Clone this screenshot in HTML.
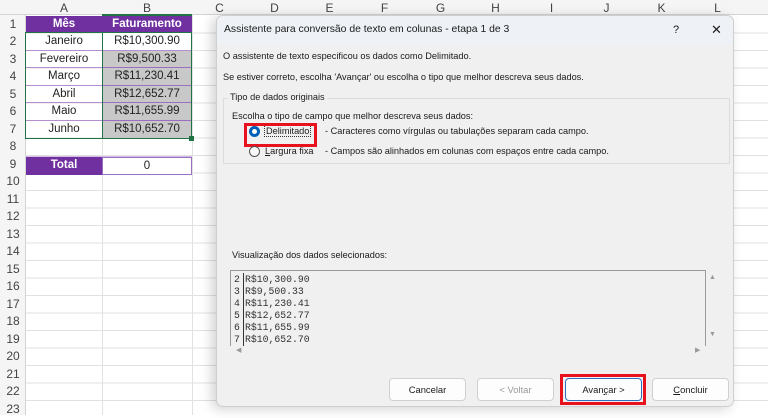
<!DOCTYPE html>
<html><head><meta charset="utf-8"><style>
*{margin:0;padding:0;box-sizing:border-box}
body{width:768px;height:415px;overflow:hidden;background:#fff;font-family:"Liberation Sans",sans-serif;position:relative}
.a{position:absolute}
.grid{left:26px;top:15.5px;width:742px;height:400px;background:repeating-linear-gradient(to bottom,transparent 0,transparent 16.5px,#e1e1e1 16.5px,#e1e1e1 17.5px)}
.vl{position:absolute;top:0;width:1px;height:415px;background:#e1e1e1}
.colh{top:0;height:15px;left:0;width:768px;background:#f5f5f5;border-bottom:1px solid #d4d4d4}
.ch{position:absolute;top:1px;height:15px;font-size:12px;color:#444;text-align:center;line-height:15px}
.rowh{left:0;top:15px;width:26px;height:400px;background:#f5f5f5;border-right:1px solid #d4d4d4}
.rn{position:absolute;left:0;width:26px;text-align:center;font-size:12px;color:#444;line-height:17.5px;height:17.5px}
.c{position:absolute;height:17.5px;line-height:17px;font-size:11.5px;text-align:center;color:#222}
.hd{background:#7030a0;color:#fff;font-weight:bold}
.dlg{left:216px;top:15px;width:518px;height:392px;background:#f0f0f0;border:1px solid #cfcfcf;border-radius:7px;box-shadow:-4px 2px 12px rgba(0,0,0,.18);overflow:hidden;font-size:9.2px;color:#1a1a1a}
.tb{left:0;top:0;width:100%;height:28px;background:#eef2f7;font-size:10.4px;line-height:28px;padding-left:7px;color:#1a1a1a}
.btn{position:absolute;top:362px;height:23px;width:77px;background:#fdfdfd;border:1px solid #d0d0d0;border-radius:4px;text-align:center;line-height:21px;font-size:9.4px}
.pv{font-family:"Liberation Mono",monospace;font-size:9.8px;line-height:12px;color:#333}
</style></head><body>
<div class="a grid"></div>
<div class="vl" style="left:102px"></div><div class="vl" style="left:192px"></div>
<div class="a colh">
<div class="ch" style="left:26px;width:76px">A</div>
<div class="ch" style="left:102px;width:90px">B</div>
<div class="ch" style="left:192px;width:55px">C</div>
<div class="ch" style="left:247px;width:55px">D</div>
<div class="ch" style="left:302px;width:55px">E</div>
<div class="ch" style="left:357px;width:55px">F</div>
<div class="ch" style="left:413px;width:55px">G</div>
<div class="ch" style="left:468px;width:55px">H</div>
<div class="ch" style="left:524px;width:55px">I</div>
<div class="ch" style="left:579px;width:55px">J</div>
<div class="ch" style="left:634px;width:55px">K</div>
<div class="ch" style="left:690px;width:55px">L</div>
</div>
<div class="a" style="left:102px;top:14px;width:90px;height:2px;background:#217346"></div>
<div class="a rowh">
<div class="rn" style="top:0.5px">1</div><div class="rn" style="top:18px">2</div><div class="rn" style="top:35.5px">3</div><div class="rn" style="top:53px">4</div><div class="rn" style="top:70.5px">5</div><div class="rn" style="top:88px">6</div><div class="rn" style="top:105.5px">7</div><div class="rn" style="top:123px">8</div><div class="rn" style="top:140.5px">9</div><div class="rn" style="top:158px">10</div><div class="rn" style="top:175.5px">11</div><div class="rn" style="top:193px">12</div><div class="rn" style="top:210.5px">13</div><div class="rn" style="top:228px">14</div><div class="rn" style="top:245.5px">15</div><div class="rn" style="top:263px">16</div><div class="rn" style="top:280.5px">17</div><div class="rn" style="top:298px">18</div><div class="rn" style="top:315.5px">19</div><div class="rn" style="top:333px">20</div><div class="rn" style="top:350.5px">21</div><div class="rn" style="top:368px">22</div><div class="rn" style="top:385.5px">23</div>
</div>
<div class="c hd" style="left:26px;top:15.5px;width:76px">Mês</div>
<div class="c hd" style="left:102px;top:15.5px;width:90px">Faturamento</div>
<div class="c" style="left:26px;top:33px;width:76px;border-bottom:1px solid #b48fd0">Janeiro</div>
<div class="c" style="left:26px;top:50.5px;width:76px;border-bottom:1px solid #b48fd0">Fevereiro</div>
<div class="c" style="left:26px;top:68px;width:76px;border-bottom:1px solid #b48fd0">Março</div>
<div class="c" style="left:26px;top:85.5px;width:76px;border-bottom:1px solid #b48fd0">Abril</div>
<div class="c" style="left:26px;top:103px;width:76px;border-bottom:1px solid #b48fd0">Maio</div>
<div class="c" style="left:26px;top:120.5px;width:76px">Junho</div>
<div class="c" style="left:102px;top:33px;width:90px;background:#fff;border-bottom:1px solid #b48fd0">R$10,300.90</div>
<div class="c" style="left:102px;top:50.5px;width:90px;background:#c8c8c8;border-bottom:1px solid #9a6fbf">R$9,500.33</div>
<div class="c" style="left:102px;top:68px;width:90px;background:#c8c8c8;border-bottom:1px solid #9a6fbf">R$11,230.41</div>
<div class="c" style="left:102px;top:85.5px;width:90px;background:#c8c8c8;border-bottom:1px solid #9a6fbf">R$12,652.77</div>
<div class="c" style="left:102px;top:103px;width:90px;background:#c8c8c8;border-bottom:1px solid #9a6fbf">R$11,655.99</div>
<div class="c" style="left:102px;top:120.5px;width:90px;background:#c8c8c8">R$10,652.70</div>
<div class="a" style="left:25px;top:32px;width:78px;height:107px;border:1px solid #217346"></div>
<div class="a" style="left:102px;top:32px;width:90px;height:107px;border:1.5px solid #217346"></div>
<div class="a" style="left:189px;top:136px;width:5px;height:5px;background:#217346"></div>
<div class="a" style="left:26px;top:155.5px;width:76px;height:2px;background:#d4bde6"></div>
<div class="a" style="left:102px;top:155.5px;width:90px;height:2px;background:#d4bde6"></div>
<div class="c hd" style="left:26px;top:157px;width:76px">Total</div>
<div class="c" style="left:102px;top:157px;width:90px;border:1px solid #9a6fbf;background:#fff">0</div>

<div class="a dlg">
<div class="a tb">Assistente para conversão de texto em colunas - etapa 1 de 3
<span class="a" style="left:456px;top:0;font-size:11px">?</span>
<span class="a" style="left:494px;top:0;font-size:13px">✕</span></div>
<div class="a" style="left:6px;top:35px">O assistente de texto especificou os dados como Delimitado.</div>
<div class="a" style="left:6px;top:56px">Se estiver correto, escolha 'Avançar' ou escolha o tipo que melhor descreva seus dados.</div>
<div class="a" style="left:6px;top:82px;width:507px;height:66px;border:1px solid #dcdcdc"></div>
<div class="a" style="left:11px;top:76px;background:#f0f0f0;padding:0 2px">Tipo de dados originais</div>
<div class="a" style="left:15px;top:95px">Escolha o tipo de campo que melhor descreva seus dados:</div>
<div class="a" style="left:32px;top:110px;width:11px;height:11px;border-radius:50%;background:#005fb8"></div>
<div class="a" style="left:35px;top:113px;width:5px;height:5px;border-radius:50%;background:#fff"></div>
<div class="a" style="left:47px;top:109px;border:1px dotted #333;padding:0 1px">Delimitado</div>
<div class="a" style="left:27px;top:107px;width:73px;height:24px;border:3px solid #e8121e"></div>
<div class="a" style="left:108px;top:110px">- Caracteres como vírgulas ou tabulações separam cada campo.</div>
<div class="a" style="left:32px;top:130px;width:11px;height:11px;border-radius:50%;border:1px solid #555;background:#f8f8f8"></div>
<div class="a" style="left:48px;top:130px"><u>L</u>argura fixa</div>
<div class="a" style="left:108px;top:130px">- Campos são alinhados em colunas com espaços entre cada campo.</div>
<div class="a" style="left:15px;top:234px">Visualização dos dados selecionados:</div>
<div class="a" style="left:13px;top:254px;width:476px;height:76px;background:#f0f0f0;border:1px solid #9a9a9a;border-bottom:none;overflow:hidden">
<div class="a" style="left:3px;top:2px;width:10px;height:80px;border-right:1px solid #333"></div>
<div class="a pv" style="left:3px;top:3px">2<br>3<br>4<br>5<br>6<br>7</div>
<div class="a pv" style="left:14px;top:3px">R$10,300.90<br>R$9,500.33<br>R$11,230.41<br>R$12,652.77<br>R$11,655.99<br>R$10,652.70</div>
</div>
<div class="a" style="left:492px;top:258px;font-size:7px;color:#999">▲</div>
<div class="a" style="left:492px;top:315px;font-size:7px;color:#999">▼</div>
<div class="a" style="left:19px;top:330px;font-size:7px;color:#999">◀</div>
<div class="a" style="left:478px;top:330px;font-size:7px;color:#999">▶</div>
<div class="btn" style="left:172px">Cancelar</div>
<div class="btn" style="left:260px;color:#999">&lt; Voltar</div>
<div class="a" style="left:343px;top:358px;width:86px;height:31px;border:3px solid #e8121e"></div>
<div class="btn" style="left:348px;border-color:#2f6fc0">Avan<u>ç</u>ar &gt;</div>
<div class="btn" style="left:435px"><u>C</u>oncluir</div>
</div>
</body></html>
